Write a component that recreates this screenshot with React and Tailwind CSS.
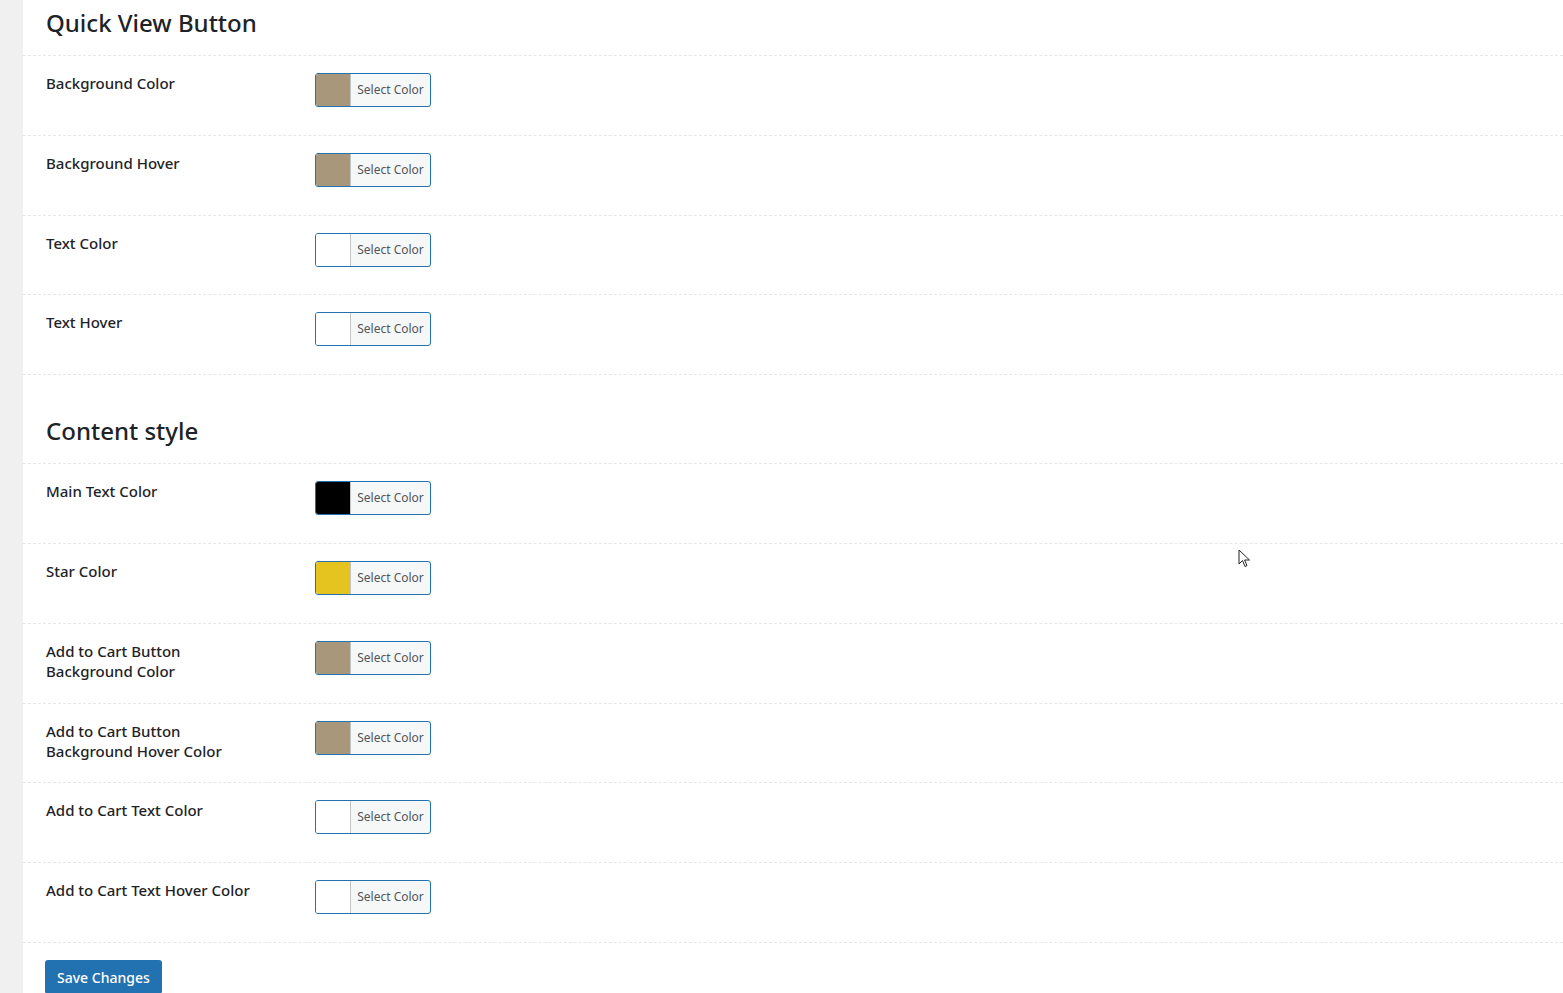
import React from 'react';

const TAN = '#a8987b';

const quickView = [
  { label: 'Background Color', color: TAN },
  { label: 'Background Hover', color: TAN },
  { label: 'Text Color', color: '#ffffff', short: true },
  { label: 'Text Hover', color: '#ffffff' },
];

const contentStyle = [
  { label: 'Main Text Color', color: '#000000' },
  { label: 'Star Color', color: '#e5c41f' },
  { label: 'Add to Cart Button Background Color', color: TAN },
  { label: 'Add to Cart Button Background Hover Color', color: TAN, short: true },
  { label: 'Add to Cart Text Color', color: '#ffffff' },
  { label: 'Add to Cart Text Hover Color', color: '#ffffff' },
];

const ColorButton = ({ color }) => (
  <button
    type="button"
    className="flex h-[34px] w-[116px] overflow-hidden rounded-[3px] border border-[#2271b1] bg-[#f6f7f7] p-0"
  >
    <span className="h-full w-[35px] border-r border-[#c3c4c7]" style={{ backgroundColor: color }} />
    <span className="flex flex-1 items-center justify-center text-[12px] leading-none text-[#50575e]">
      Select Color
    </span>
  </button>
);

const Row = ({ label, color, short }) => (
  <div
    className={`flex border-b border-dashed border-[#e6e6e6] pl-[23px] pt-[17px] ${short ? 'h-[79px]' : 'h-[80px]'}`}
  >
    <div className="w-[269px] shrink-0 pr-[55px] text-[15px] font-medium leading-[20px] text-[#1d2327]">
      {label}
    </div>
    <ColorButton color={color} />
  </div>
);

const Heading = ({ children, top }) => (
  <div className={`border-b border-dashed border-[#e6e6e6] pl-[23px] pb-[14px] ${top}`}>
    <h2 className="text-[24px] leading-[36px] font-medium text-[#1d2327]">{children}</h2>
  </div>
);

export default function App() {
  return (
    <div
      className="relative flex h-[993px] overflow-hidden bg-white"
      style={{ fontFamily: '"Noto Sans", "Open Sans", sans-serif' }}
    >
      <div className="w-[23px] shrink-0 bg-[#f0f0f0]" />
      <div className="flex-1">
        <Heading top="pt-[5px]">Quick View Button</Heading>
        {quickView.map((r) => (
          <Row key={r.label} {...r} />
        ))}
        <Heading top="pt-[38px]">Content style</Heading>
        {contentStyle.map((r) => (
          <Row key={r.label} {...r} />
        ))}
        <div className="pl-[22px] pt-[17px]">
          <button
            type="button"
            className="h-[34px] rounded-[3px] bg-[#2271b1] px-[12px] text-[14px] font-medium text-white"
          >
            Save Changes
          </button>
        </div>
      </div>
      <svg className="absolute left-[1238px] top-[549px]" width="14" height="20" viewBox="0 0 14 20">
        <path
          d="M1 1 L1 15 L4.5 11.5 L7 17.5 L9 16.6 L6.6 11 L11.5 11 Z"
          fill="white"
          stroke="#222"
          strokeWidth="1"
          strokeLinejoin="round"
        />
      </svg>
    </div>
  );
}
